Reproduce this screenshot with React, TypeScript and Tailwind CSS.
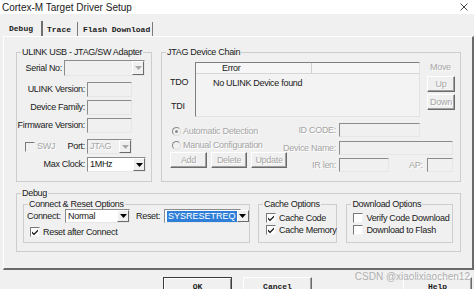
import React from "react";

// old-style Win32 bevels
const sunken = "border border-t-[#8c8c8c] border-l-[#8c8c8c] border-r-[#e6e6e6] border-b-[#e6e6e6]";
const raised = "border border-t-white border-l-white border-r-[#6b6b6b] border-b-[#6b6b6b]";
const dim = "text-[#a6a6a6] [text-shadow:1px_1px_0_#ffffff]";

function Group({ label, className = "", children }: { label: string; className?: string; children?: React.ReactNode }) {
  return (
    <fieldset className={`border border-[#cdcdcd] ${className}`}>
      <legend className="ml-[4px] px-[1px] leading-[11px]">{label}</legend>
      {children}
    </fieldset>
  );
}

function Arrow({ off }: { off?: boolean }) {
  return (
    <div className={`ml-auto h-full w-[12px] shrink-0 flex items-center justify-center bg-[#f0f0f0] ${raised}`}>
      <svg width="7" height="4" viewBox="0 0 7 4">
        <path d="M0 0H7L3.5 4Z" fill={off ? "#a8a8a8" : "#000"} />
      </svg>
    </div>
  );
}

function Select({ value, className = "", off, hi }: { value: string; className?: string; off?: boolean; hi?: boolean }) {
  return (
    <div className={`flex items-stretch ${sunken} ${off ? "bg-[#f0f0f0]" : "bg-white"} ${className}`}>
      <div className={`flex-1 flex items-center pl-[2px] ${off ? dim : ""}`}>
        {hi ? <span className="bg-[#2f7fd8] text-white px-[1px] tracking-[0px]">{value}</span> : value}
      </div>
      <Arrow off={off} />
    </div>
  );
}

function Box({ className = "" }: { className?: string }) {
  return <div className={`${sunken} bg-[#f0f0f0] h-full ${className}`} />;
}

function Btn({ children, className = "" }: { children: React.ReactNode; className?: string }) {
  return (
    <div className={`flex items-center justify-center bg-[#f0f0f0] shadow-[inset_-1px_-1px_0_#a0a0a0] ${raised} ${className}`}>
      {children}
    </div>
  );
}

function Check({ on, off }: { on?: boolean; off?: boolean }) {
  return (
    <div
      className={`w-[10px] h-[10px] shrink-0 flex items-center justify-center border border-t-[#7a7a7a] border-l-[#7a7a7a] border-r-[#f4f4f4] border-b-[#f4f4f4] ${
        off ? "bg-[#f0f0f0]" : "bg-white"
      }`}
    >
      {on && (
        <svg width="8" height="8" viewBox="0 0 8 8">
          <path d="M1 3.5L3 5.5L7 1.5V3.2L3 7.2L1 5.2Z" fill="#111" />
        </svg>
      )}
    </div>
  );
}

function Radio({ on }: { on?: boolean }) {
  return (
    <div className="w-[9px] h-[9px] shrink-0 rounded-full flex items-center justify-center bg-[#f0f0f0] border border-t-[#8a8a8a] border-l-[#8a8a8a] border-r-[#dedede] border-b-[#dedede]">
      {on && <div className="w-[3px] h-[3px] rounded-full bg-[#8a8a8a]" />}
    </div>
  );
}

export default function App() {
  return (
    <div className="relative w-[474px] h-[289px] overflow-hidden whitespace-nowrap bg-[#f0f0f0] text-[#1a1a1a] font-['Liberation_Sans',Arial,sans-serif] text-[9px] leading-[11px] tracking-[-0.3px]">
      {/* Title bar */}
      <div className="h-[14px] bg-white flex items-center justify-between pl-[2px] pr-[6px] text-[10px] tracking-normal">
        <span>Cortex-M Target Driver Setup</span>
        <svg width="8" height="8" viewBox="0 0 8 8">
          <path d="M0.5 0.5L7.5 7.5M7.5 0.5L0.5 7.5" stroke="#333" strokeWidth="0.9" />
        </svg>
      </div>

      {/* Tabs */}
      <div className="h-[22px] flex items-end pl-[6px] font-['Liberation_Mono',monospace] font-bold text-[8px] tracking-normal">
        <div className="w-[37px] h-[15px] pl-[3px] flex items-center border-r-2 border-[#6f6f6f]">Debug</div>
        <div className="w-[35px] h-[14px] pl-[4px] flex items-center border-r border-[#7a7a7a]">Trace</div>
        <div className="w-[75px] h-[14px] pl-[5px] flex items-center border-r border-[#7a7a7a]">Flash Download</div>
      </div>

      {/* Tab page */}
      <div className="ml-[3px] w-[471px] h-[234px] border-t border-l border-t-white border-l-white border-r-2 border-b-2 border-r-[#6a6a6a] border-b-[#6a6a6a] pl-[12px] pt-[10px]">
        <div className="flex gap-[9px]">
          {/* ULINK adapter */}
          <Group label="ULINK USB - JTAG/SW Adapter" className="w-[136px] h-[135px]">
            <div className="flex flex-col">
              <div className="mt-[2px] h-[16px] flex items-center">
                <div className="w-[45px] text-right">Serial No:</div>
                <Select off value="" className="ml-[2px] w-[81px] h-full" />
              </div>
              {["ULINK Version:", "Device Family:", "Firmware Version:"].map((l, i) => (
                <div key={l} className={`${i === 0 ? "mt-[6px]" : "mt-[3px]"} h-[15px] flex items-center`}>
                  <div className="w-[68px] text-right">{l}</div>
                  <Box className="ml-[2px] w-[45px]" />
                </div>
              ))}
              <div className="mt-[6px] h-[15px] flex items-center">
                <div className="w-[68px] flex items-center">
                  <div className="ml-[8px]">
                    <Check off />
                  </div>
                  <span className={`ml-[2px] ${dim}`}>SWJ</span>
                  <span className="ml-auto">Port:</span>
                </div>
                <Select off value="JTAG" className="ml-[2px] w-[45px] h-full" />
              </div>
              <div className="mt-[3px] h-[15px] flex items-center">
                <div className="w-[68px] text-right">Max Clock:</div>
                <Select value="1MHz" className="ml-[2px] w-[59px] h-full" />
              </div>
            </div>
          </Group>

          {/* JTAG chain */}
          <Group label="JTAG Device Chain" className="w-[300px] h-[135px]">
            <div className="mt-[4px] h-[55px] flex">
              <div className="w-[33px] pl-[8px] flex flex-col">
                <span className="mt-[15px]">TDO</span>
                <span className="mt-[13px] ml-[1px]">TDI</span>
              </div>
              <div className="w-[225px] h-full flex flex-col bg-[#f3f3f3] border border-t-[#7f7f7f] border-l-[#7f7f7f] border-r-[#e2e2e2] border-b-[#e2e2e2]">
                <div className="h-[11px] flex border-b border-[#d6d6d6] bg-[#f6f6f6]">
                  <div className="w-[116px] pl-[26px] leading-[10px] border-r border-[#d0d0d0]">Error</div>
                </div>
                <div className="mt-[4px] pl-[17px]">No ULINK Device found</div>
              </div>
              <div className="ml-[7px] w-[28px] flex flex-col">
                <div className={`h-[11px] pl-[3px] ${dim}`}>Move</div>
                <Btn className={`mt-[3px] h-[16px] ${dim}`}>Up</Btn>
                <Btn className={`mt-[2px] h-[16px] ${dim}`}>Down</Btn>
              </div>
            </div>

            <div className="mt-[6px] flex">
              <div className="w-[125px] pl-[8px] flex flex-col">
                <div className="mt-[1px] h-[14px] pl-[2px] flex items-center gap-[2px]">
                  <Radio on />
                  <span className={dim}>Automatic Detection</span>
                </div>
                <div className="h-[14px] pl-[2px] flex items-center gap-[2px]">
                  <Radio />
                  <span className={dim}>Manual Configuration</span>
                </div>
                <div className="h-[16px] flex gap-[4px]">
                  <Btn className={`w-[38px] ${dim}`}>Add</Btn>
                  <Btn className={`w-[37px] ${dim}`}>Delete</Btn>
                  <Btn className={`w-[37px] ${dim}`}>Update</Btn>
                </div>
              </div>
              <div className="flex flex-col">
                <div className="h-[14px] flex items-center">
                  <div className={`w-[49px] flex justify-end ${dim}`}>ID CODE:</div>
                  <Box className="ml-[3px] w-[81px]" />
                </div>
                <div className="mt-[4px] h-[14px] flex items-center">
                  <div className={`w-[49px] flex justify-end ${dim}`}>Device Name:</div>
                  <Box className="ml-[3px] w-[114px]" />
                </div>
                <div className="mt-[3px] h-[14px] flex items-center">
                  <div className={`w-[49px] flex justify-end ${dim}`}>IR len:</div>
                  <Box className="ml-[3px] w-[50px]" />
                  <span className={`ml-[20px] ${dim}`}>AP:</span>
                  <Box className="ml-[4px] w-[26px]" />
                </div>
              </div>
            </div>
          </Group>
        </div>

        {/* Debug options */}
        <Group label="Debug" className="mt-[6px] w-[445px] h-[64px]">
          <div className="pl-[6px] flex">
            <Group label="Connect & Reset Options" className="w-[227px] h-[44px]">
              <div className="mt-[-1px] h-[14px] flex items-center">
                <div className="w-[39px] pl-[3px]">Connect:</div>
                <Select value="Normal" className="ml-[2px] w-[65px] h-full" />
                <div className="ml-[6px] w-[26px]">Reset:</div>
                <Select value="SYSRESETREQ" hi className="ml-[2px] w-[77px] h-full" />
              </div>
              <div className="mt-[3px] h-[12px] pl-[6px] flex items-center gap-[3px]">
                <Check on />
                <span>Reset after Connect</span>
              </div>
            </Group>
            <Group label="Cache Options" className="ml-[8px] w-[79px] h-[44px]">
              <div className="mt-[2px] pl-[7px] flex flex-col">
                <div className="h-[12px] flex items-center gap-[3px]">
                  <Check on />
                  <span>Cache Code</span>
                </div>
                <div className="h-[12px] flex items-center gap-[3px]">
                  <Check on />
                  <span>Cache Memory</span>
                </div>
              </div>
            </Group>
            <Group label="Download Options" className="ml-[9px] w-[107px] h-[44px]">
              <div className="mt-[2px] pl-[6px] flex flex-col">
                <div className="h-[12px] flex items-center gap-[3px]">
                  <Check />
                  <span>Verify Code Download</span>
                </div>
                <div className="h-[12px] flex items-center gap-[3px]">
                  <Check />
                  <span>Download to Flash</span>
                </div>
              </div>
            </Group>
          </div>
        </Group>
      </div>

      {/* Dialog buttons */}
      <div className="mt-[7px] pl-[163px] flex font-['Liberation_Mono',monospace] font-bold text-[8px] tracking-normal">
        <div className="w-[69px] h-[20px] pb-[2px] flex items-center justify-center bg-[#f0f0f0] border border-[#3c3c3c] shadow-[inset_1px_1px_0_#ffffff,inset_-1px_-1px_0_#8a8a8a]">
          OK
        </div>
        <Btn className="ml-[11px] w-[69px] h-[20px] pb-[2px]">Cancel</Btn>
        <Btn className="ml-[91px] w-[69px] h-[20px] pb-[2px]">Help</Btn>
      </div>

      {/* watermark */}
      <div className="absolute right-[4px] top-[270px] text-[10px] leading-[13px] tracking-normal text-[#a8a8a8]/90">
        CSDN @xiaolixiaochen12
      </div>
    </div>
  );
}
